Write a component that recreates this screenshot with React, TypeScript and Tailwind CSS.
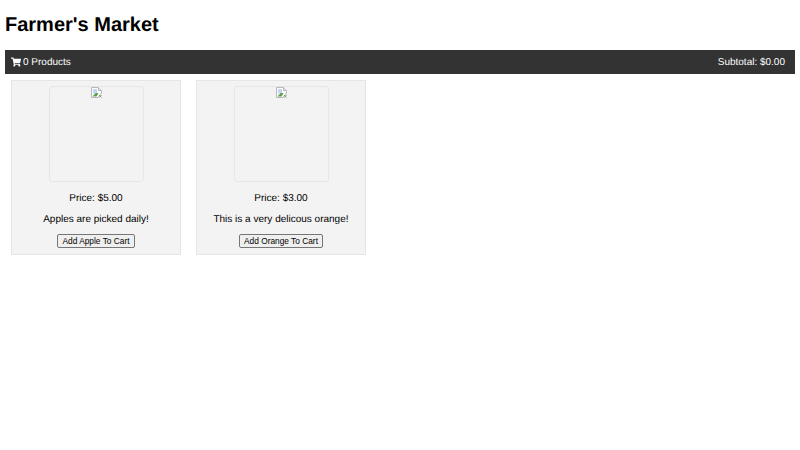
import { FaShoppingCart } from 'react-icons/fa';

const products = [
  { name: 'Apple', price: '$5.00', description: 'Apples are picked daily!' },
  { name: 'Orange', price: '$3.00', description: 'This is a very delicous orange!' },
];

// chrome's broken image glyph
function BrokenImage() {
  return (
    <svg width="11" height="11" viewBox="0 0 11 11">
      <path d="M0.5 0.5H7.5L10.5 3.5V6L7 10.5H0.5Z" fill="#fff" stroke="#b8b8b8" />
      <path d="M7.5 0.5V3.5H10.5" fill="#e4e4e4" stroke="#b8b8b8" />
      <path d="M2 2H6V5L2 7Z" fill="#c3d5f2" />
      <path d="M1.5 9.5L5 5.5L7.5 6.5L5.5 9.5Z" fill="#5ea04e" />
      <path d="M8 8L10.5 10.5M8 10.5L10.5 8" stroke="#7f9c72" />
    </svg>
  );
}

function ProductCard({ name, price, description }: { name: string; price: string; description: string }) {
  return (
    <div className="w-[170px] h-[175px] bg-[#f3f3f3] border border-[#e6e6e6] flex flex-col items-center pt-[5px]">
      <div className="w-[95px] h-[96px] border border-[#e6e6e6] rounded-[3px] flex justify-center">
        <BrokenImage />
      </div>
      <p className="mt-[10.5px] text-[10px] leading-[12px]">Price: {price}</p>
      <p className="mt-[9px] text-[10px] leading-[12px]">{description}</p>
      <button className="mt-[8.5px] h-[14px] px-[4.5px] text-[8.33px] leading-[12px] bg-[#efefef] border border-[#767676] rounded-[2px]">
        Add {name} To Cart
      </button>
    </div>
  );
}

export default function App() {
  return (
    <div className="h-[450px] bg-white text-black px-[5px] font-['Liberation_Sans',Arial,sans-serif] [text-rendering:geometricPrecision]">
      <h1 className="pt-[13px] text-[20px] leading-[25px] font-bold">Farmer's Market</h1>
      <div className="mt-[12px] h-[24px] bg-[#333333] text-white text-[10px] flex items-center justify-between pl-[6px] pr-[10px]">
        <span className="flex items-center gap-[2px]">
          <FaShoppingCart size={10} />
          0 Products
        </span>
        <span>Subtotal: $0.00</span>
      </div>
      <div className="flex gap-[15px] pl-[6px] pt-[6px]">
        {products.map((p) => (
          <ProductCard key={p.name} {...p} />
        ))}
      </div>
    </div>
  );
}
